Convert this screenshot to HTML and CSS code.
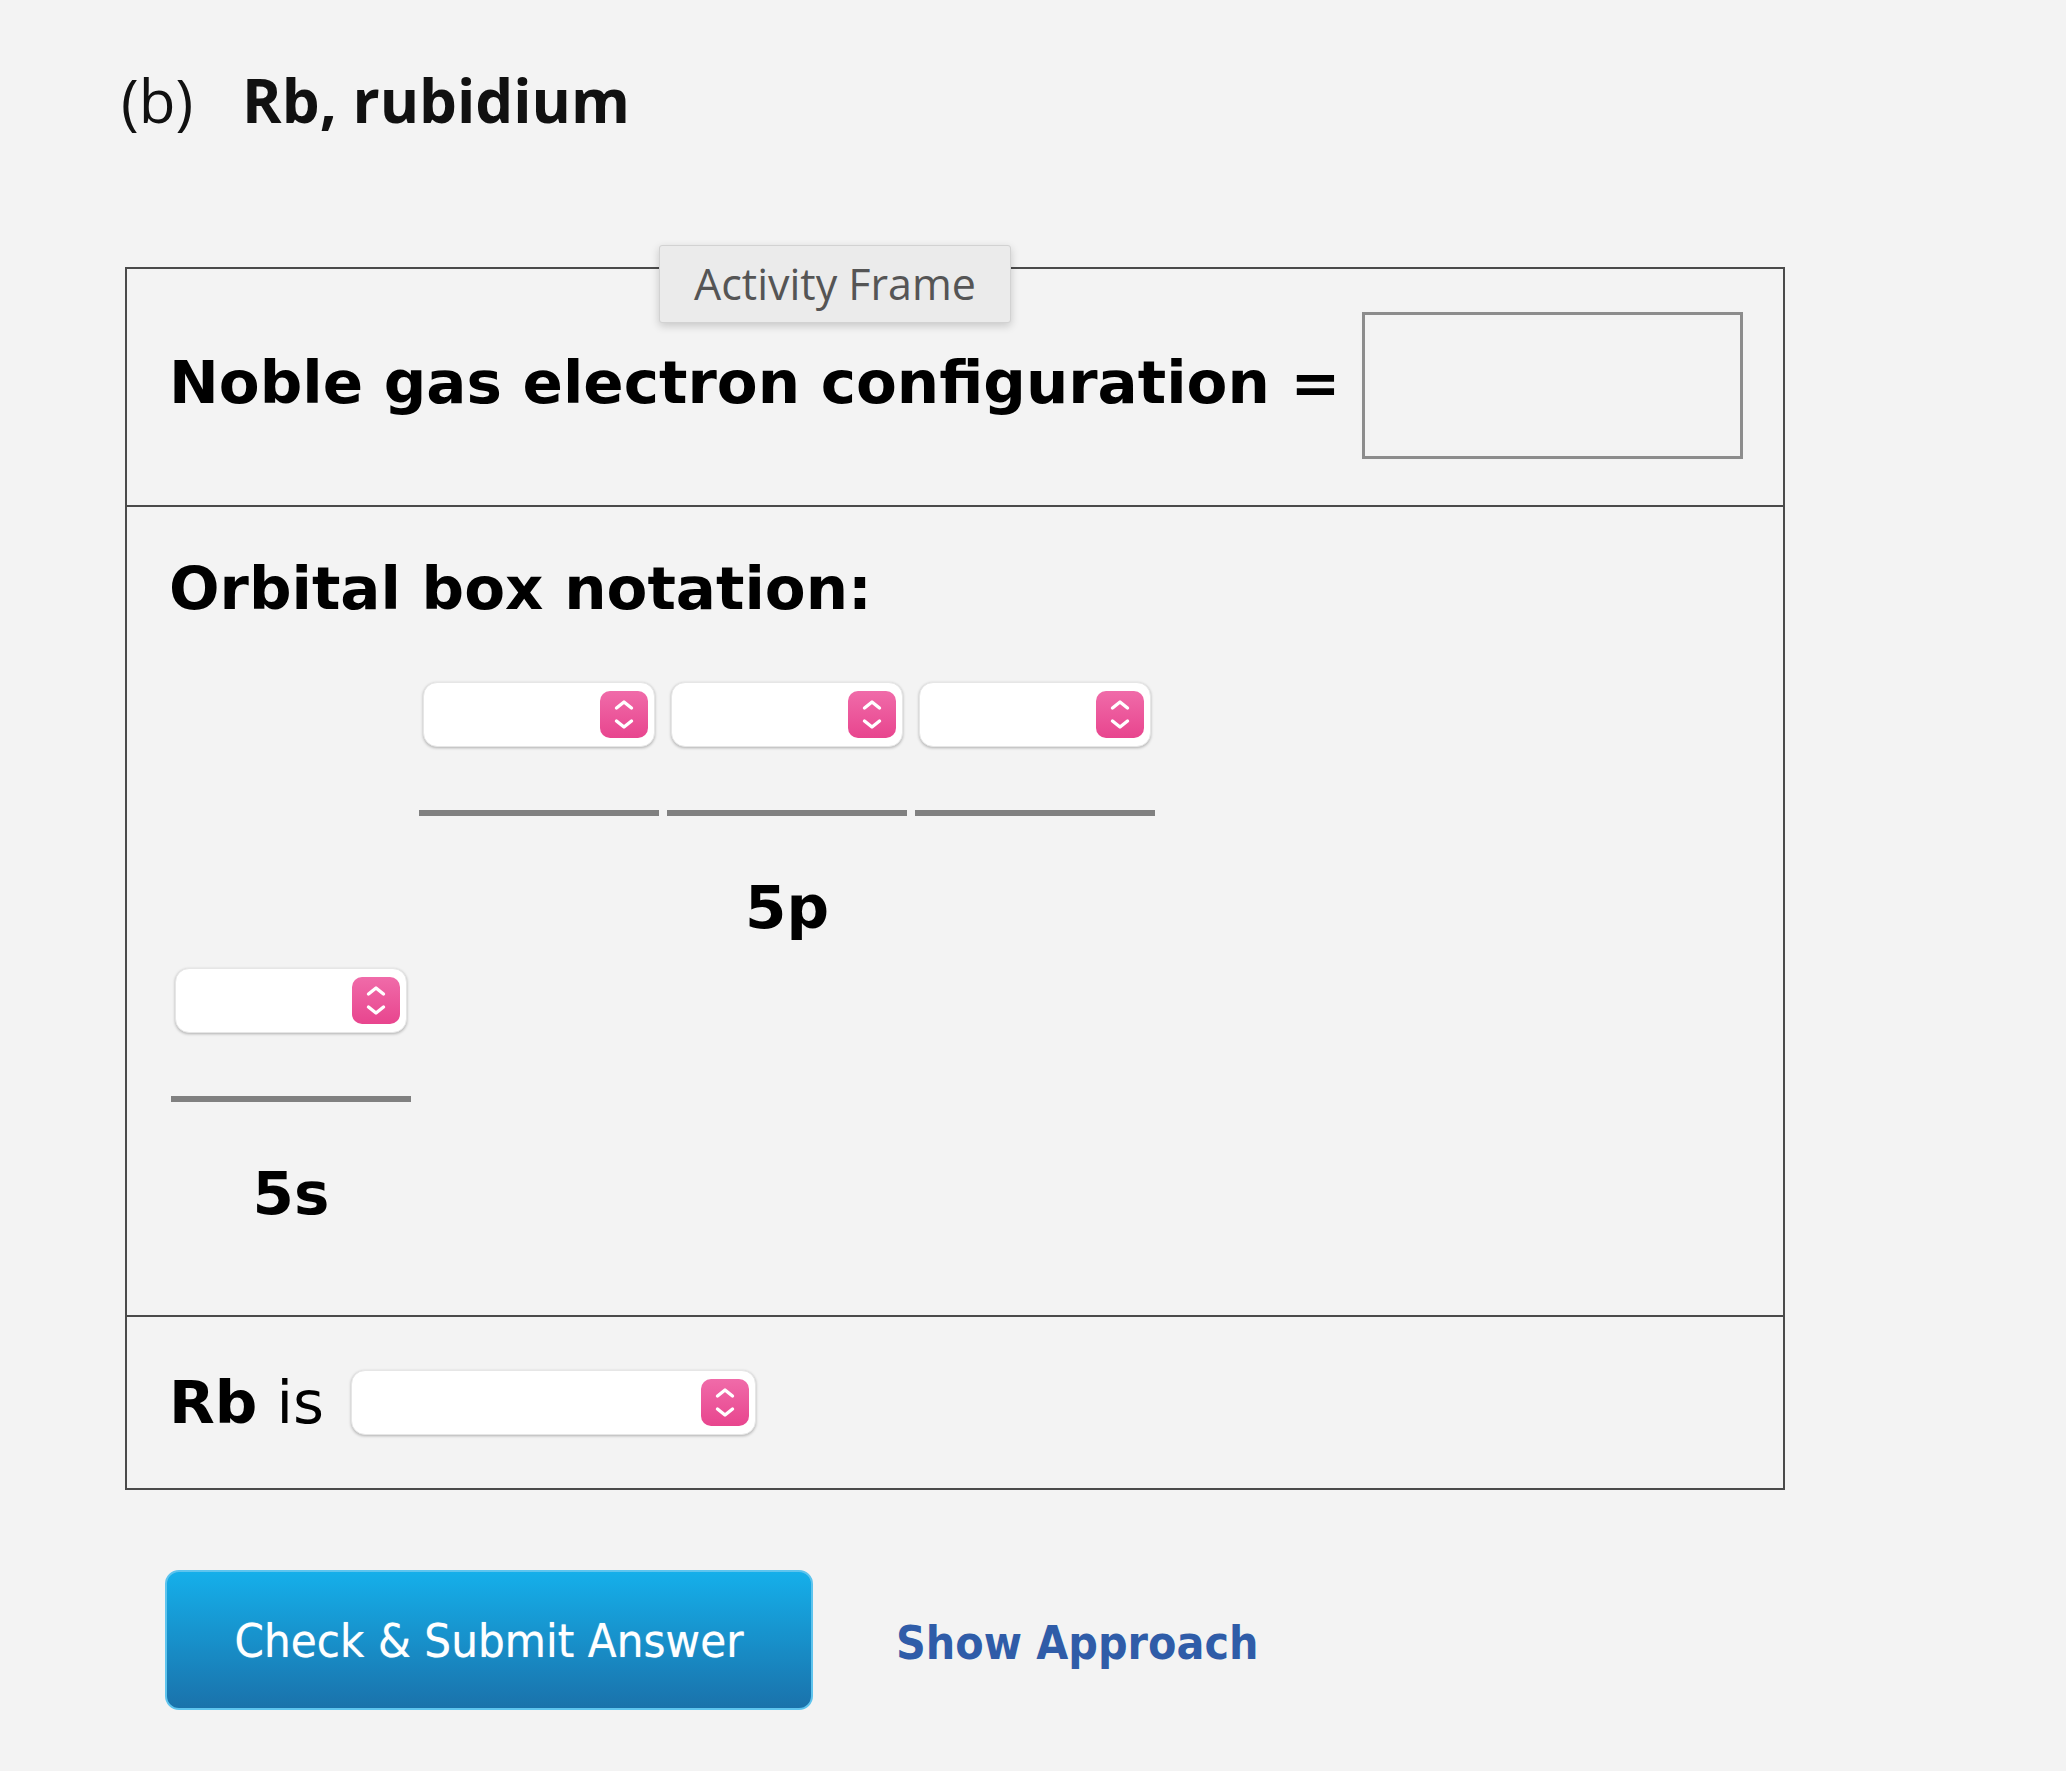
FILE: index.html
```html
<!DOCTYPE html>
<html lang="en">
<head>
<meta charset="utf-8">
<title>Rb, rubidium</title>
<link rel="stylesheet" href="styles.css">
</head>
<body>
<div class="page">
  <h2 class="title"><span class="part">(b)</span><span class="elem">Rb, rubidium</span></h2>

  <div class="frame">
    <div class="tab">Activity Frame</div>

    <div class="sec sec-config">
      <div class="label">Noble gas electron configuration =</div>
      <div class="answer-box"></div>
    </div>

    <div class="sec sec-orbital">
      <div class="label heading">Orbital box notation:</div>
      <div class="orbitals">
        <div class="sublevel sub-p">
          <div class="boxes three">
            <div class="orbital">
              <div class="select"><span class="spin"><svg viewBox="0 0 48 46" width="48" height="46"><path d="M16.5 16 L24 10 L31.5 16 M16.5 29 L24 35 L31.5 29" fill="none" stroke="#fff" stroke-width="3.4" stroke-linecap="round" stroke-linejoin="round"/></svg></span></div>
              <div class="line"></div>
            </div>
            <div class="orbital">
              <div class="select"><span class="spin"><svg viewBox="0 0 48 46" width="48" height="46"><path d="M16.5 16 L24 10 L31.5 16 M16.5 29 L24 35 L31.5 29" fill="none" stroke="#fff" stroke-width="3.4" stroke-linecap="round" stroke-linejoin="round"/></svg></span></div>
              <div class="line"></div>
            </div>
            <div class="orbital">
              <div class="select"><span class="spin"><svg viewBox="0 0 48 46" width="48" height="46"><path d="M16.5 16 L24 10 L31.5 16 M16.5 29 L24 35 L31.5 29" fill="none" stroke="#fff" stroke-width="3.4" stroke-linecap="round" stroke-linejoin="round"/></svg></span></div>
              <div class="line"></div>
            </div>
          </div>
          <div class="label sublabel">5p</div>
        </div>

        <div class="sublevel sub-s">
          <div class="boxes one">
            <div class="orbital">
              <div class="select"><span class="spin"><svg viewBox="0 0 48 46" width="48" height="46"><path d="M16.5 16 L24 10 L31.5 16 M16.5 29 L24 35 L31.5 29" fill="none" stroke="#fff" stroke-width="3.4" stroke-linecap="round" stroke-linejoin="round"/></svg></span></div>
              <div class="line"></div>
            </div>
          </div>
          <div class="label sublabel">5s</div>
        </div>
      </div>
    </div>

    <div class="sec sec-type">
      <span class="label">Rb</span><span class="plain">is</span>
      <div class="select wide"><span class="spin"><svg viewBox="0 0 48 46" width="48" height="46"><path d="M16.5 16 L24 10 L31.5 16 M16.5 29 L24 35 L31.5 29" fill="none" stroke="#fff" stroke-width="3.4" stroke-linecap="round" stroke-linejoin="round"/></svg></span></div>
    </div>
  </div>

  <div class="actions">
    <button class="submit" type="button">Check &amp; Submit Answer</button>
    <a class="approach" href="#">Show Approach</a>
  </div>
</div>
</body>
</html>
```

FILE: styles.css
```css
* { box-sizing: border-box; }

html, body {
  margin: 0;
  padding: 0;
  background: #f3f3f3;
}

.page {
  padding: 64px 0 40px 0;
}

.title {
  margin: 0 0 0 121px;
  font-family: "Open Sans", sans-serif;
  font-size: 60px;
  line-height: 72px;
  color: #111;
  display: flex;
}

.title .part {
  font-weight: 400;
}

.title .elem {
  font-weight: 700;
  margin-left: 49px;
}

.frame {
  position: relative;
  margin: 131px 0 0 125px;
  width: 1660px;
  border: 2px solid #4a4a4a;
}

.tab {
  position: absolute;
  left: 532px;
  top: -24px;
  width: 352px;
  height: 78px;
  display: flex;
  align-items: center;
  justify-content: center;
  background: #ebebeb;
  border: 1px solid #d2d2d2;
  border-radius: 3px;
  box-shadow: 0 3px 8px rgba(0, 0, 0, 0.18);
  font-family: "Open Sans", sans-serif;
  font-size: 43px;
  color: #555;
  padding-bottom: 2px;
}

.sec + .sec {
  border-top: 2px solid #4a4a4a;
}

.label {
  font-family: "DejaVu Sans", Verdana, sans-serif;
  font-weight: 700;
  font-size: 59.5px;
  line-height: 69px;
  color: #000;
}

.sec-config {
  height: 236px;
  padding: 0 40px 10px 42px;
  display: flex;
  align-items: center;
  justify-content: space-between;
}

.answer-box {
  width: 381px;
  height: 147px;
  border: 3px solid #8c8c8c;
  margin-top: 6px;
}

.sec-orbital {
  padding: 47px 0 87px 42px;
}

.orbitals {
  margin: 59px 0 0 2px;
  display: grid;
  grid-template-columns: repeat(4, 240px);
  column-gap: 8px;
  row-gap: 26px;
}

.sub-p {
  grid-column: 2 / span 3;
  grid-row: 1;
}

.sub-s {
  grid-column: 1;
  grid-row: 2;
}

.boxes {
  display: grid;
  column-gap: 8px;
}

.boxes.three { grid-template-columns: repeat(3, 240px); }
.boxes.one { grid-template-columns: 240px; }

.orbital {
  display: flex;
  flex-direction: column;
  align-items: center;
}

.select {
  width: 232px;
  height: 65px;
  background: #fff;
  border: 1px solid #e6e6e6;
  border-radius: 14px;
  box-shadow: 0 1px 3px rgba(0, 0, 0, 0.28);
  display: flex;
  align-items: center;
  justify-content: flex-end;
  padding-right: 6px;
}

.spin {
  width: 48px;
  height: 47px;
  border-radius: 10px;
  background: linear-gradient(#f06ba9, #e8458e);
  display: flex;
  align-items: center;
  justify-content: center;
}

.spin svg { display: block; }

.line {
  width: 240px;
  height: 6px;
  margin-top: 63px;
  background: #808080;
}

.sublabel {
  margin-top: 57px;
  text-align: center;
}

.sec-type {
  height: 173px;
  padding-left: 42px;
  display: flex;
  align-items: center;
}

.plain {
  font-family: "DejaVu Sans", Verdana, sans-serif;
  font-weight: 400;
  font-size: 59.5px;
  line-height: 69px;
  color: #000;
  margin-left: 19px;
}

.select.wide {
  width: 405px;
  margin-left: 27px;
}

.actions {
  margin: 80px 0 0 165px;
  display: flex;
  align-items: center;
}

.submit {
  width: 648px;
  height: 140px;
  border: 2px solid #5ec4ee;
  border-radius: 14px;
  background: linear-gradient(#15afea, #1a72ab);
  color: #fff;
  font-family: "DejaVu Sans Condensed", "DejaVu Sans", sans-serif;
  font-stretch: condensed;
  font-size: 47px;
  padding: 0;
  cursor: pointer;
  text-shadow: 0 0 1px rgba(255, 255, 255, 0.6);
}

.approach {
  margin-left: 83px;
  font-family: "DejaVu Sans Condensed", "DejaVu Sans", sans-serif;
  font-stretch: condensed;
  font-weight: 700;
  font-size: 46px;
  color: #2f5ca8;
  text-decoration: none;
  padding-top: 6px;
}
```
